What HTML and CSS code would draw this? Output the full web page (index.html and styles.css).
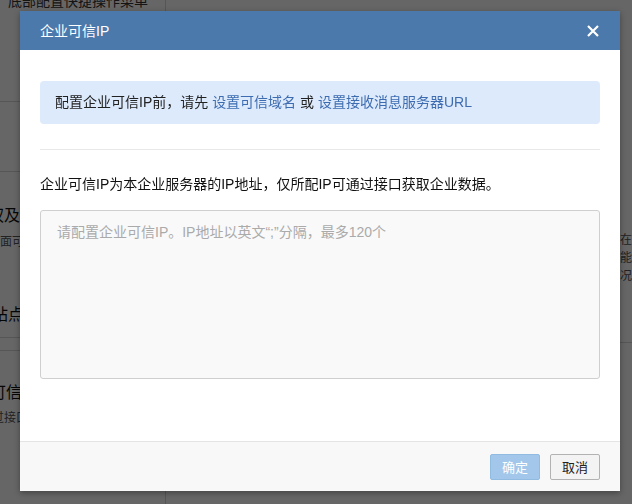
FILE: index.html
```html
<!DOCTYPE html>
<html lang="zh-CN">
  <head>
    <meta charset="UTF-8" />
    <meta name="viewport" content="width=device-width, initial-scale=1.0" />
    <title>企业可信IP</title>
    <link rel="stylesheet" href="styles.css">
  </head>
  <body>
    <div class="page">
      <aside class="side">
        <div class="side-block top">
          <p class="side-top">】底部配置快捷操作菜单</p>
        </div>
        <div class="side-block plain"></div>
        <div class="side-block tall">
          <h3 class="cut-2">授权及使用</h3>
          <p class="cut-1">页面可见</p>
          <h3 class="cut-3">站点</h3>
        </div>
        <div class="side-block gap"></div>
        <div class="side-block last">
          <h3 class="cut-4">可信IP</h3>
          <p class="cut-5">过接口</p>
        </div>
      </aside>
      <section class="main">
        <div class="main-block">
          <p>在<br />能<br />况</p>
        </div>
      </section>
    </div>

    <div class="mask"></div>

    <div class="dialog">
      <header class="dialog-head">
        <span class="dialog-title">企业可信IP</span>
        <button class="close" aria-label="关闭">
          <svg width="12" height="12" viewBox="0 0 12 12">
            <path d="M1 1 L11 11 M11 1 L1 11" stroke="#fff" stroke-width="2.2" fill="none" />
          </svg>
        </button>
      </header>
      <div class="dialog-body">
        <div class="tip">
          配置企业可信IP前，请先 <a href="#">设置可信域名</a> 或 <a href="#">设置接收消息服务器URL</a>
        </div>
        <hr class="divider" />
        <p class="desc">企业可信IP为本企业服务器的IP地址，仅所配IP可通过接口获取企业数据。</p>
        <textarea class="ip-input" placeholder="请配置企业可信IP。IP地址以英文“;”分隔，最多120个"></textarea>
      </div>
      <footer class="dialog-foot">
        <button class="btn btn-primary" disabled>确定</button>
        <button class="btn">取消</button>
      </footer>
    </div>
  </body>
</html>
```

FILE: styles.css
```css
body {
  margin: 0;
  background: #fff;
  font-family: "Liberation Sans", "Noto Sans CJK SC", sans-serif;
  color: #222;
  overflow: hidden;
}

/* page behind the modal */
.page {
  display: flex;
  height: 504px;
  overflow: hidden;
}

.side {
  width: 165px;
  flex: none;
  border-right: 1px solid #d8d8d8;
}

.side p,
.side h3 {
  margin: 0;
  white-space: nowrap;
  font-weight: normal;
}

.side h3 {
  font-size: 16px;
  line-height: 20px;
  color: #111;
}

.side p {
  font-size: 12px;
  line-height: 16px;
  color: #555;
}

.side-block {
  border-bottom: 1px solid #d8d8d8;
  box-sizing: border-box;
}

.side-block.top {
  height: 108px;
}

.side-top {
  font-size: 14px !important;
  line-height: 14px !important;
  margin: -6px 0 0 -6px !important;
  color: #333 !important;
}

.side-block.plain {
  height: 70px;
}

.side-block.tall {
  height: 166px;
  padding-top: 34px;
}

.cut-2 {
  margin-left: -28px !important;
}

.cut-1 {
  margin: 8px 0 0 -12px !important;
}

.cut-3 {
  margin: 55px 0 0 -8px !important;
}

.side-block.gap {
  height: 13px;
}

.side-block.last {
  border-bottom: none;
  padding-top: 32px;
}

.cut-4 {
  margin-left: -10px !important;
}

.cut-5 {
  margin: 7px 0 0 -8px !important;
}

.main {
  flex: 1;
}

.main-block {
  height: 343px;
  border-bottom: 1px solid #d8d8d8;
  box-sizing: border-box;
  padding: 231px 0 0 454px;
}

.main-block p {
  margin: 0;
  font-size: 12px;
  line-height: 18px;
  color: #555;
}

.mask {
  position: fixed;
  inset: 0;
  background: rgba(0, 0, 0, 0.6);
}

/* modal */
.dialog {
  position: absolute;
  left: 20px;
  top: 11px;
  width: 600px;
  height: 480px;
  background: #fff;
  display: flex;
  flex-direction: column;
  box-shadow: 0 2px 6px rgba(0, 0, 0, 0.35);
}

.dialog-head {
  height: 39px;
  background: #4c79ac;
  display: flex;
  align-items: center;
  justify-content: space-between;
  padding: 0 20px;
}

.dialog-title {
  color: #fff;
  font-size: 14px;
  line-height: 20px;
}

.close {
  background: none;
  border: none;
  padding: 0;
  margin-right: 1px;
  display: flex;
  cursor: pointer;
}

.dialog-body {
  flex: 1;
  padding: 31px 20px 0;
}

.tip {
  background: #ddeafc;
  border-radius: 4px;
  height: 43px;
  line-height: 43px;
  padding: 0 15px;
  font-size: 14px;
  color: #222;
}

.tip a {
  color: #3d6cb0;
  text-decoration: none;
}

.divider {
  border: none;
  border-top: 1px solid #e8e8e8;
  margin: 25px 0 0;
}

.desc {
  font-size: 14px;
  line-height: 20px;
  margin: 24px 0 16px;
  color: #111;
}

.ip-input {
  display: block;
  width: 100%;
  height: 169px;
  box-sizing: border-box;
  background: #f9f9f9;
  border: 1px solid #cfcfcf;
  border-radius: 3px;
  padding: 11px 16px;
  font-family: inherit;
  font-size: 14px;
  line-height: 20px;
  resize: none;
  outline: none;
}

.ip-input::placeholder {
  color: #aaa;
}

.dialog-foot {
  height: 49px;
  border-top: 1px solid #e4e4e4;
  background: #f8f8f8;
  display: flex;
  align-items: center;
  justify-content: flex-end;
  gap: 10px;
  padding: 0 20px;
}

.btn {
  width: 50px;
  height: 26px;
  border: 1px solid #b2b2b2;
  border-radius: 2px;
  background: #f3f3f3;
  color: #222;
  font-family: inherit;
  font-size: 13px;
  padding: 0;
  cursor: pointer;
}

.btn-primary {
  background: #a2c7ea;
  border-color: #92bbe2;
  color: #fff;
}
```
